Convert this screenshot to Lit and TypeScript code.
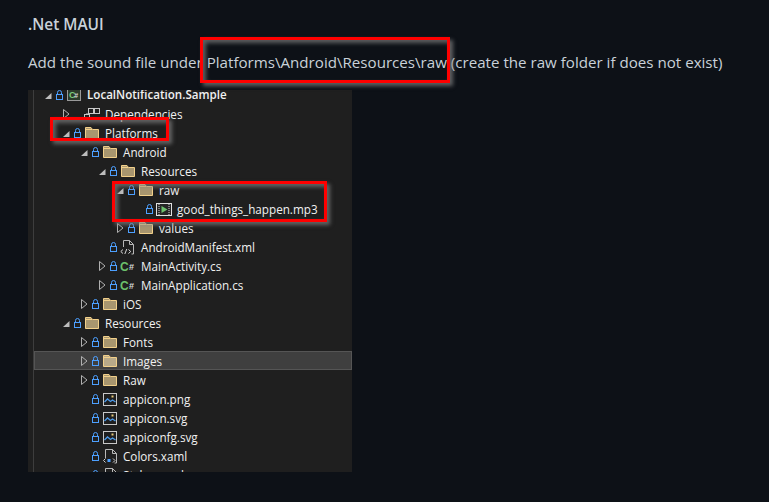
import { LitElement, css, html, svg, type TemplateResult } from 'lit'
import { customElement } from 'lit/decorators.js'

type IconName = 'project' | 'deps' | 'folder' | 'audio' | 'xml' | 'csharp' | 'image' | 'xaml'

interface TreeRow {
  level: number
  label: string
  icon: IconName
  arrow?: 'open' | 'closed'
  lock?: boolean
  bold?: boolean
  selected?: boolean
}

const ROWS: TreeRow[] = [
  { level: 0, label: 'LocalNotification.Sample', icon: 'project', arrow: 'open', lock: true, bold: true },
  { level: 1, label: 'Dependencies', icon: 'deps', arrow: 'closed' },
  { level: 1, label: 'Platforms', icon: 'folder', arrow: 'open', lock: true },
  { level: 2, label: 'Android', icon: 'folder', arrow: 'open', lock: true },
  { level: 3, label: 'Resources', icon: 'folder', arrow: 'open', lock: true },
  { level: 4, label: 'raw', icon: 'folder', arrow: 'open', lock: true },
  { level: 5, label: 'good_things_happen.mp3', icon: 'audio', lock: true },
  { level: 4, label: 'values', icon: 'folder', arrow: 'closed', lock: true },
  { level: 3, label: 'AndroidManifest.xml', icon: 'xml', lock: true },
  { level: 3, label: 'MainActivity.cs', icon: 'csharp', arrow: 'closed', lock: true },
  { level: 3, label: 'MainApplication.cs', icon: 'csharp', arrow: 'closed', lock: true },
  { level: 2, label: 'iOS', icon: 'folder', arrow: 'closed', lock: true },
  { level: 1, label: 'Resources', icon: 'folder', arrow: 'open', lock: true },
  { level: 2, label: 'Fonts', icon: 'folder', arrow: 'closed', lock: true },
  { level: 2, label: 'Images', icon: 'folder', arrow: 'closed', lock: true, selected: true },
  { level: 2, label: 'Raw', icon: 'folder', arrow: 'closed', lock: true },
  { level: 2, label: 'appicon.png', icon: 'image', lock: true },
  { level: 2, label: 'appicon.svg', icon: 'image', lock: true },
  { level: 2, label: 'appiconfg.svg', icon: 'image', lock: true },
  { level: 2, label: 'Colors.xaml', icon: 'xaml', lock: true },
  { level: 2, label: 'Styles.xaml', icon: 'xaml', lock: true },
]

const ICONS: Record<IconName, TemplateResult> = {
  project: svg`
    <rect x="1.5" y="2.5" width="13" height="11" fill="#2b3a2b" stroke="#9a9a9a" />
    <text x="3" y="11" class="glyph-project">C</text>
    <text x="8.2" y="10.6" class="glyph-project-hash">#</text>`,
  deps: svg`
    <g fill="none" stroke="#c8c8c8">
      <rect x="0.5" y="8.5" width="5" height="5" />
      <rect x="4.5" y="2.5" width="5" height="5" />
      <rect x="10.5" y="2.5" width="5" height="5" />
      <path d="M3 8.5V7M9.5 5h1" />
    </g>`,
  folder: svg`
    <path class="folder-body" d="M1.5 13.5V2.5h5.5l1.5 2h6v9z" stroke="#f2d08a" />
    <path d="M2 4.5h6" stroke="#f2d08a" />`,
  audio: svg`
    <rect x="0.5" y="2.5" width="15" height="12" fill="#262626" stroke="#e0e0e0" />
    <path d="M3 3v11M13 3v11" stroke="#d8d8d8" stroke-dasharray="1 1" />
    <path d="M5.5 5l6 3.5-6 3.5z" fill="#6cc16c" />`,
  xml: svg`
    <path d="M3.5 8V1.5h6l4 4v9.5h-2" fill="none" stroke="#b8b8b8" />
    <path d="M9.5 1.5v4h4" fill="none" stroke="#b8b8b8" />
    <path d="M3 10.5L0.8 12.5 3 14.5M8.5 10.5l2.2 2-2.2 2M6.8 10l-2 5" fill="none" stroke="#d8d8d8" />`,
  csharp: svg`
    <text x="0" y="12.5" class="glyph-c">C</text>
    <text x="9" y="11.5" class="glyph-hash">#</text>`,
  image: svg`
    <rect x="1.5" y="2.5" width="13" height="12" fill="#1f1f1f" stroke="#c8c8c8" />
    <path d="M2.5 11l3-3 3 2.5 2-1.5 3 2" fill="none" stroke="#4d9bea" stroke-width="1.3" />
    <rect x="9.5" y="4.5" width="2" height="2" fill="#e6c878" />`,
  xaml: svg`
    <path d="M3.5 10V1.5h7l4 4V15h-2" fill="none" stroke="#b8b8b8" />
    <path d="M10.5 1.5v4h4" fill="none" stroke="#b8b8b8" />
    <path d="M3.5 10.5l-2 2 2 2M11 10.5l2 2-2 2" fill="none" stroke="#d0d0d0" />
    <rect x="5.5" y="11" width="3" height="3" fill="#4da0ff" />`,
}

@customElement('app-root')
export class AppRoot extends LitElement {
  private renderArrow(arrow?: 'open' | 'closed') {
    if (arrow === 'open') {
      return html`<svg class="arrow" viewBox="0 0 9 12"><path d="M7.5 4v6h-6.5z" fill="#bdbdbd" /></svg>`
    }
    if (arrow === 'closed') {
      return html`<svg class="arrow" viewBox="0 0 9 12">
        <path d="M1.5 1.5l5.5 4.5-5.5 4.5z" fill="none" stroke="#b0b0b0" />
      </svg>`
    }
    return html`<span></span>`
  }

  private renderRow(row: TreeRow) {
    const classes = ['row', row.bold ? 'bold' : '', row.selected ? 'selected' : ''].join(' ')
    // the selected row starts after the tree's guide line, so take that off its indent
    const indent = row.level * 18 + 16 - (row.selected ? 6 : 0)
    return html`
      <div class=${classes} style="padding-left:${indent}px">
        ${this.renderArrow(row.arrow)}
        ${row.lock
          ? html`<svg class="lock" viewBox="0 0 7 10">
              <path d="M1.5 5V2.5a2 2 0 0 1 4 0V5" fill="none" stroke="#4da0ff" />
              <rect x="0.5" y="4.5" width="6" height="5" fill="none" stroke="#4da0ff" />
            </svg>`
          : html`<span></span>`}
        <svg class="icon" viewBox="0 0 16 16">${ICONS[row.icon]}</svg>
        <span class="label">${row.label}</span>
      </div>
    `
  }

  render() {
    return html`
      <h2>.Net MAUI</h2>
      <p>Add the sound file under Platforms\\Android\\Resources\\raw (create the raw folder if does not exist)</p>
      <div class="tree">
        <div class="rows">${ROWS.map((row) => this.renderRow(row))}</div>
      </div>
      <div class="mark mark-path"></div>
      <div class="mark mark-platforms"></div>
      <div class="mark mark-raw"></div>
    `
  }

  static styles = css`
    :host {
      display: block;
      position: relative;
      box-sizing: border-box;
      height: 502px;
      padding: 13px 0 0 28px;
      overflow: hidden;
      background: #0d1117;
      color: #c9d1d9;
      font-family: 'Open Sans', 'Noto Sans', sans-serif;
    }

    h2 {
      margin: 0 0 13px;
      font-size: 15.4px;
      font-weight: 600;
      line-height: 24px;
    }

    p {
      margin: 0 0 16px;
      font-size: 15.13px;
      line-height: 24px;
      white-space: nowrap;
    }

    .tree {
      position: relative;
      width: 324px;
      height: 382px;
      overflow: hidden;
      background: #1f1f1f;
      color: #f1f1f1;
      font-size: 11.7px;
    }

    .tree::before {
      content: '';
      position: absolute;
      left: 5px;
      top: 0;
      bottom: 0;
      width: 1px;
      background: #3d3d3d;
    }

    .rows {
      margin-top: -5px;
    }

    .row {
      box-sizing: border-box;
      display: grid;
      grid-template-columns: 9px 7px 16px auto;
      column-gap: 3px;
      align-items: center;
      height: 19px;
    }

    .row.bold {
      font-weight: 600;
      font-size: 11.6px;
    }

    .row.selected {
      margin-left: 6px;
      background: #3f3f3f;
      box-shadow: inset 0 0 0 1px #555;
    }

    .folder-body {
      fill: #a8966f;
    }

    .selected .folder-body {
      fill: #b8a988;
    }

    .arrow {
      width: 9px;
      height: 12px;
    }

    .lock {
      width: 7px;
      height: 10px;
    }

    .icon {
      width: 16px;
      height: 16px;
    }

    .label {
      margin-left: 2px;
      white-space: nowrap;
    }

    .glyph-project {
      font: 700 9px 'Liberation Sans', sans-serif;
      fill: #7ccb7c;
    }

    .glyph-project-hash {
      font: 700 7px 'Liberation Sans', sans-serif;
      fill: #d8d8d8;
    }

    .glyph-c {
      font: 700 12px 'Liberation Sans', sans-serif;
      fill: #6cc16c;
    }

    .glyph-hash {
      font: 700 9px 'Liberation Sans', sans-serif;
      fill: #d8d8d8;
    }

    .mark {
      position: absolute;
      box-sizing: border-box;
      border: 3px solid #f00;
      box-shadow: 3px 3px 4px rgba(130, 130, 130, 0.7), inset 3px 3px 4px rgba(130, 130, 130, 0.7);
    }

    .mark-path {
      left: 200px;
      top: 37px;
      width: 250px;
      height: 46px;
    }

    .mark-platforms {
      left: 50px;
      top: 117px;
      width: 119px;
      height: 24px;
    }

    .mark-raw {
      left: 112px;
      top: 181px;
      width: 215px;
      height: 41px;
    }
  `
}
